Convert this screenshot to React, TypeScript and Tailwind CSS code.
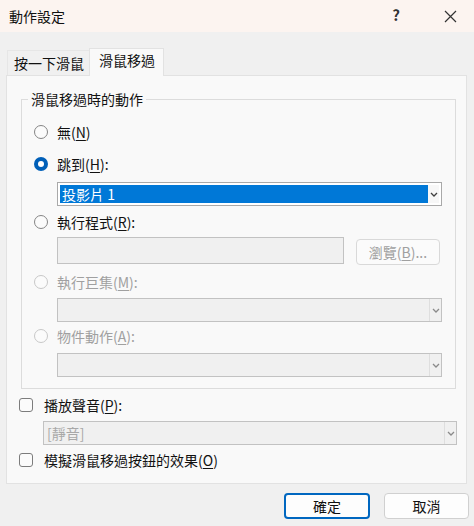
import React from "react";

const FONT = { fontFamily: '"Noto Sans CJK TC", "Noto Sans", sans-serif' };

function Radio({ checked, disabled }: { checked?: boolean; disabled?: boolean }) {
  if (checked) {
    return (
      <div className="w-[14px] h-[14px] rounded-full bg-[#005fb8] flex items-center justify-center shrink-0">
        <div className="w-[6px] h-[6px] rounded-full bg-white" />
      </div>
    );
  }
  return (
    <div
      className={
        "w-[14px] h-[14px] rounded-full border bg-[#fbfbfb] shrink-0 " +
        (disabled ? "border-[#c8c8c8]" : "border-[#858585]")
      }
    />
  );
}

function Chevron({ color = "#606060" }: { color?: string }) {
  return (
    <svg width="8" height="5" viewBox="0 0 8 5">
      <path d="M1 1 L4 4 L7 1" fill="none" stroke={color} strokeWidth="1.3" />
    </svg>
  );
}

function RadioRow({
  label,
  k,
  checked,
  disabled,
  colon,
  mt,
}: {
  label: string;
  k: string;
  checked?: boolean;
  disabled?: boolean;
  colon?: boolean;
  mt: string;
}) {
  return (
    <div className={"flex items-center h-[20px] pl-[12px] " + mt}>
      <Radio checked={checked} disabled={disabled} />
      <span
        className={
          "ml-[9px] text-[14px] leading-[20px] " + (disabled ? "text-[#a0a0a0]" : "text-[#111]")
        }
      >
        {label}(<span className="underline underline-offset-2">{k}</span>){colon ? ":" : ""}
      </span>
    </div>
  );
}

function DisabledSelect({ mt, text }: { mt: string; text?: string }) {
  return (
    <div className={"flex h-[24px] border border-[#c2c2c2] bg-[#f0f0f0] " + mt}>
      <div className="flex-1 flex items-center pl-[3px] text-[14px] text-[#a8a8a8]">{text}</div>
      <div className="w-[12px] border-l border-[#dedede] flex items-center justify-center">
        <Chevron color="#8a8a8a" />
      </div>
    </div>
  );
}

function Checkbox() {
  return <div className="w-[14px] h-[14px] rounded-[3px] border border-[#7c7c7c] bg-[#fbfbfb] shrink-0" />;
}

export default function App() {
  return (
    <div className="w-[474px] h-[526px] bg-[#f0f0f0] overflow-hidden flex flex-col" style={FONT}>
      {/* Title bar */}
      <div className="h-[32px] bg-[#fcf4f0] flex items-center shrink-0">
        <span className="ml-[9px] text-[14px] text-[#111]">動作設定</span>
        <div className="flex-1" />
        <span className="text-[15px] font-bold text-[#333] mr-[44px] mt-[-1px]">?</span>
        <svg width="13" height="13" viewBox="0 0 13 13" className="mr-[17px]">
          <path d="M1 1 L12 12 M12 1 L1 12" stroke="#333" strokeWidth="1.2" fill="none" />
        </svg>
      </div>

      {/* Tabs */}
      <div className="mt-[16px] h-[27px] flex items-start pl-[7px] shrink-0">
        <div className="mt-[2px] h-[25px] w-[82px] flex items-center pl-[6px] text-[14px] text-[#111] border-t border-l border-[#e6e6e6]">
          按一下滑鼠
        </div>
        <div className="relative z-10 h-[28px] w-[75px] bg-[#f9f9f9] border-t border-x border-[#e2e2e2] flex items-center pl-[9px] pb-[4px] text-[14px] text-[#111]">
          滑鼠移過
        </div>
      </div>

      {/* Panel */}
      <div className="ml-[6px] w-[461px] bg-[#f9f9f9] border border-[#e2e2e2] flex flex-col shrink-0">
        {/* Group box */}
        <div className="relative ml-[14px] mt-[23px] w-[435px] border border-[#dcdcdc] pt-[22px] pb-[11px]">
          <span className="absolute left-[6px] top-[-11px] px-[3px] bg-[#f9f9f9] text-[14px] leading-[20px] text-[#111]">
            滑鼠移過時的動作
          </span>
          <RadioRow label="無" k="N" mt="" />
          <RadioRow label="跳到" k="H" checked colon mt="mt-[12px]" />
          <div className="ml-[35px] w-[385px] mt-[8px] h-[24px] border border-[#a9a9a9] bg-white flex p-[2px]">
            <div className="flex-1 bg-[#0078d7] flex items-center pl-[2px] text-[14px] text-white">
              投影片 1
            </div>
            <div className="w-[11px] flex items-center justify-center bg-[#f7f7f7]">
              <Chevron color="#404040" />
            </div>
          </div>
          <RadioRow label="執行程式" k="R" colon mt="mt-[6px]" />
          <div className="ml-[35px] mt-[5px] h-[28px] flex items-start">
            <div className="w-[287px] h-[27px] border border-[#c2c2c2] bg-[#f0f0f0]" />
            <div className="ml-[12px] mt-[2px] w-[84px] h-[26px] rounded-[4px] border border-[#d9d9d9] bg-[#fbfbfb] flex items-center justify-center text-[14px] text-[#a0a0a0]">
              瀏覽(<span className="underline underline-offset-2">B</span>)...
            </div>
          </div>
          <RadioRow label="執行巨集" k="M" colon disabled mt="mt-[7px]" />
          <div className="ml-[35px] w-[385px]">
            <DisabledSelect mt="mt-[6px]" />
          </div>
          <RadioRow label="物件動作" k="A" colon disabled mt="mt-[4px]" />
          <div className="ml-[35px] w-[385px]">
            <DisabledSelect mt="mt-[7px]" />
          </div>
        </div>

        {/* Checkboxes */}
        <div className="mt-[6px] h-[20px] flex items-center pl-[12px]">
          <Checkbox />
          <span className="ml-[11px] text-[14px] text-[#111]">
            播放聲音(<span className="underline underline-offset-2">P</span>):
          </span>
        </div>
        <div className="ml-[36px] w-[414px]">
          <DisabledSelect mt="mt-[6px]" text="[靜音]" />
        </div>
        <div className="mt-[5px] mb-[13px] h-[20px] flex items-center pl-[12px]">
          <Checkbox />
          <span className="ml-[11px] text-[14px] text-[#111]">
            模擬滑鼠移過按鈕的效果(<span className="underline underline-offset-2">O</span>)
          </span>
        </div>
      </div>

      {/* Buttons */}
      <div className="mt-[9px] flex justify-end pr-[5px] gap-[14px]">
        <div className="w-[86px] h-[26px] rounded-[4px] border-2 border-[#0067c0] bg-[#fdfdfd] flex items-center justify-center text-[14px] text-[#111]">
          確定
        </div>
        <div className="w-[85px] h-[26px] rounded-[4px] border border-[#d0d0d0] bg-[#fdfdfd] flex items-center justify-center text-[14px] text-[#111]">
          取消
        </div>
      </div>
    </div>
  );
}
